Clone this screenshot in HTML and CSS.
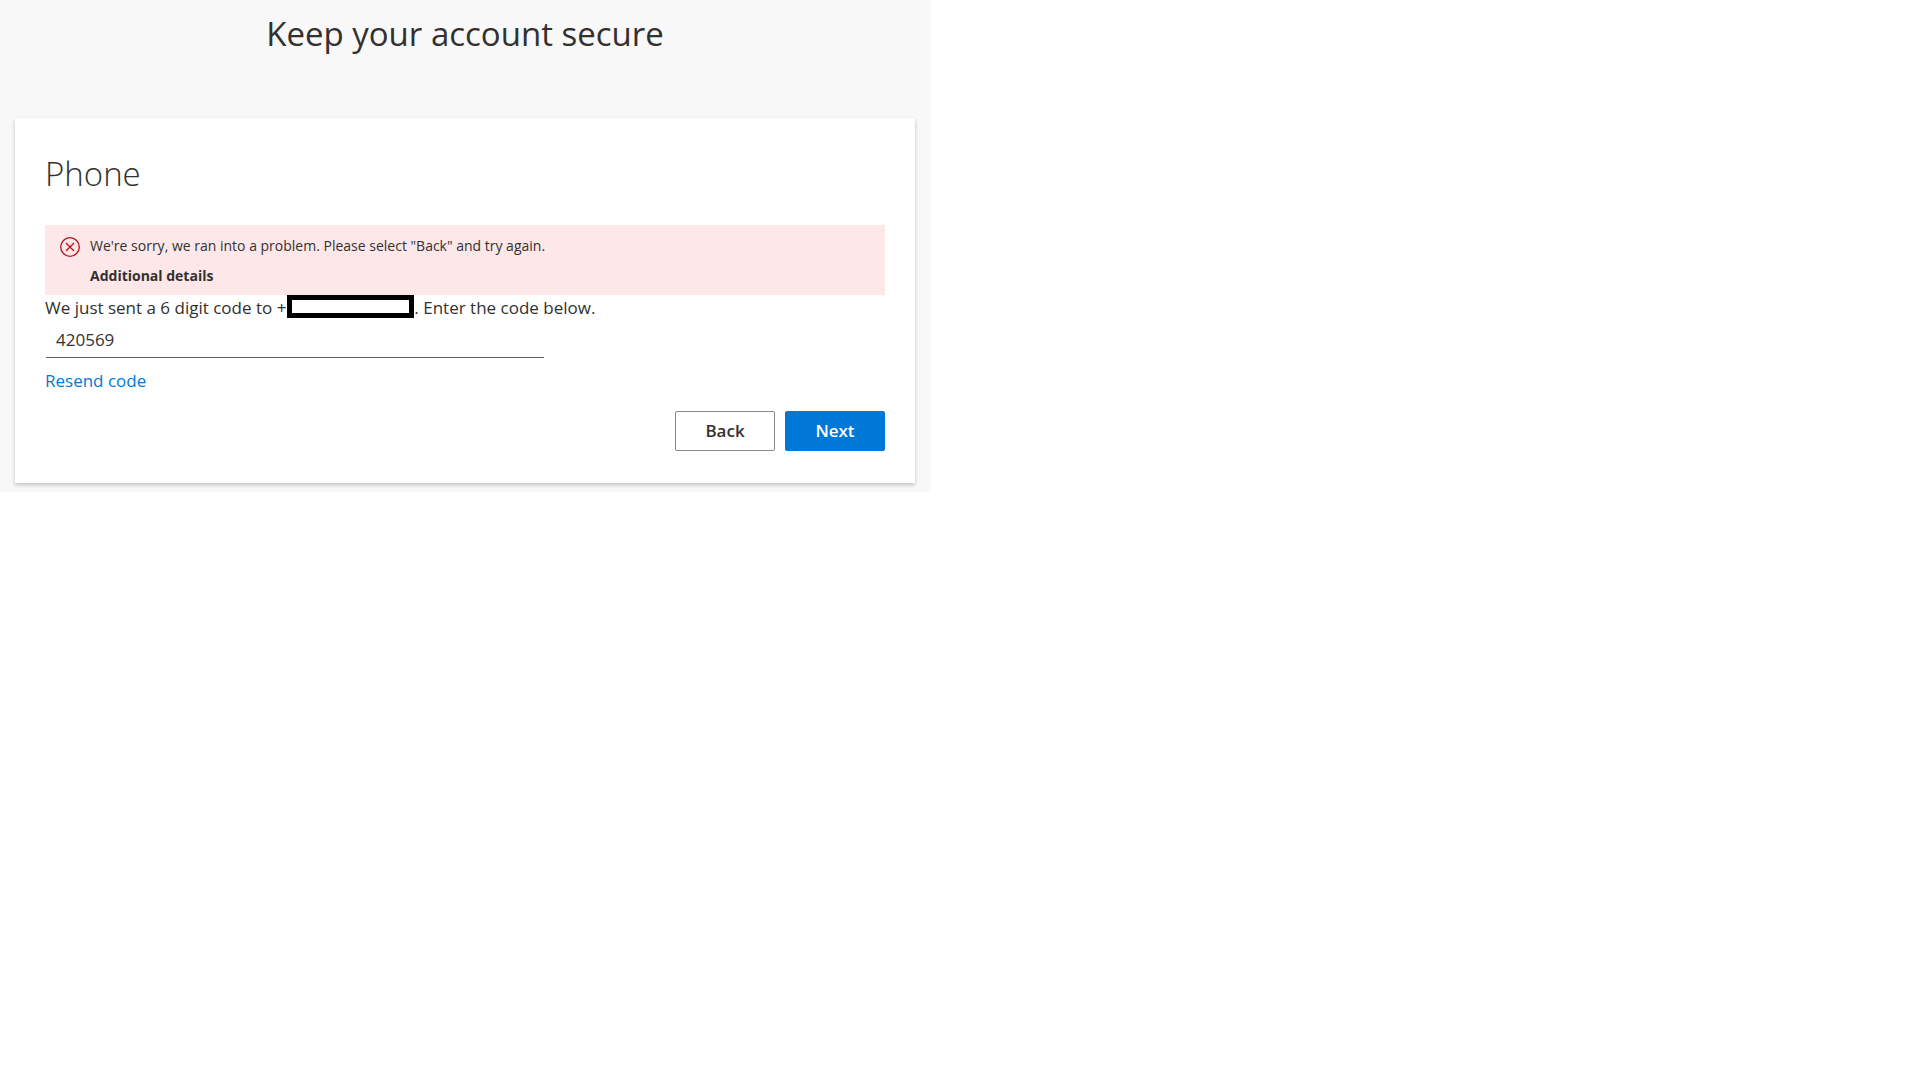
FILE: index.html
```html
<!DOCTYPE html>
<html lang="en">
<head>
<meta charset="utf-8">
<title>Keep your account secure</title>
<link rel="stylesheet" href="styles.css">
</head>
<body>
<main class="panel">
  <h1 class="title">Keep your account secure</h1>
  <form class="card">
    <h2 class="method">Phone</h2>
    <div class="alert" role="alert">
      <svg class="alert-icon" viewBox="0 0 20 20" aria-hidden="true">
        <circle cx="10" cy="10" r="9.3"/>
        <path d="M6 6l8 8M14 6l-8 8"/>
      </svg>
      <div class="alert-body">
        <p class="alert-text">We're sorry, we ran into a problem. Please select "Back" and try again.</p>
        <p class="alert-more">Additional details</p>
      </div>
    </div>
    <label class="prompt" for="code"><span>We just sent a 6 digit code to +</span><span class="redacted"></span><span>. Enter the code below.</span></label>
    <input class="code" id="code" type="text" inputmode="numeric" value="420569">
    <a class="resend" href="#">Resend code</a>
    <div class="actions">
      <button class="button" type="button">Back</button>
      <button class="button primary" type="submit">Next</button>
    </div>
  </form>
</main>
</body>
</html>
```
FILE: styles.css
```css
* {
  box-sizing: border-box;
}

body {
  margin: 0;
  background: #fff;
  color: #323130;
  font-family: "Open Sans", "Noto Sans", sans-serif;
  font-size: 17px;
  line-height: 26px;
}

h1, h2, p {
  margin: 0;
}

.panel {
  max-width: 931px;
  padding: 10px 16px 9px 15px;
  background: #f8f8f8;
}

.title {
  margin-bottom: 60px;
  font-size: 33px;
  font-weight: 400;
  line-height: 48px;
  text-align: center;
}

.card {
  display: flex;
  flex-direction: column;
  padding: 32px 30px;
  background: #fff;
  box-shadow: 0 2px 4px rgba(0, 0, 0, 0.22);
}

.method {
  margin-bottom: 27px;
  font-size: 33px;
  font-weight: 300;
  line-height: 48px;
}

.alert {
  display: flex;
  gap: 10px;
  padding: 6px 15px 4px;
  background: #fde7e9;
  font-size: 14px;
  line-height: 30px;
}

.alert-icon {
  width: 20px;
  height: 20px;
  margin-top: 6px;
  fill: none;
  stroke: #b5121b;
  stroke-width: 1.3;
}

.alert-more {
  font-weight: 700;
}

.prompt {
  display: flex;
  align-items: flex-start;
}

.redacted {
  width: 127px;
  height: 23px;
  margin-left: 1px;
  border: 5px solid #000;
}

.code {
  width: 498px;
  max-width: 100%;
  height: 37px;
  margin: 0 1px 10px;
  padding: 0 10px;
  border: 0;
  border-bottom: 1px solid #605e5c;
  background: transparent;
  color: inherit;
  font: inherit;
}

.resend {
  align-self: flex-start;
  color: #0078d4;
  text-decoration: none;
}

.actions {
  display: flex;
  justify-content: flex-end;
  gap: 10px;
  margin-top: 17px;
}

.button {
  width: 100px;
  height: 40px;
  border: 1px solid #8a8886;
  border-radius: 2px;
  background: #fff;
  color: inherit;
  font: inherit;
  font-weight: 600;
}

.primary {
  border-color: #0078d7;
  background: #0078d7;
  color: #fff;
}
```
